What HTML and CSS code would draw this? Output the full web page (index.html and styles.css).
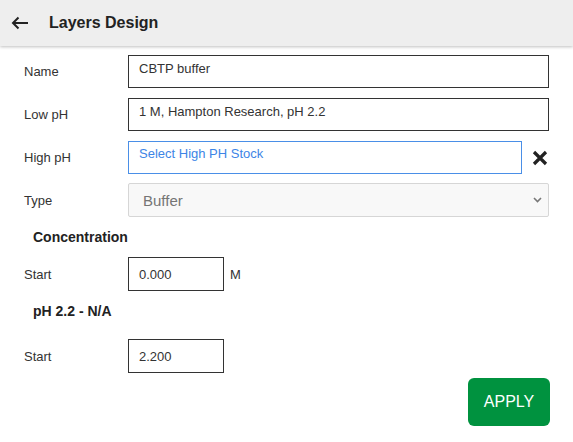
FILE: index.html
```html
<!DOCTYPE html>
<html>
<head>
<meta charset="utf-8">
<link rel="stylesheet" href="styles.css">
</head>
<body>
<header class="topbar">
  <svg class="back" width="18" height="14" viewBox="0 0 18 14"><path d="M17 7H2M7.5 1.5L2 7l5.5 5.5" fill="none" stroke="#222" stroke-width="2"/></svg>
  <span class="title">Layers Design</span>
</header>
<main class="form">
  <div class="row">
    <label class="lbl">Name</label>
    <div class="field">CBTP buffer</div>
  </div>
  <div class="row">
    <label class="lbl">Low pH</label>
    <div class="field">1 M, Hampton Research, pH 2.2</div>
  </div>
  <div class="row row-tight">
    <label class="lbl">High pH</label>
    <div class="field field-blue">Select High PH Stock</div>
    <svg class="clear" width="16" height="16" viewBox="0 0 16 16"><path d="M2 2L14 14M14 2L2 14" stroke="#222" stroke-width="3.2"/></svg>
  </div>
  <div class="row">
    <label class="lbl">Type</label>
    <div class="select">
      <span>Buffer</span>
      <svg width="9" height="6" viewBox="0 0 9 6"><path d="M1 1l3.5 3.5L8 1" fill="none" stroke="#777" stroke-width="1.6"/></svg>
    </div>
  </div>
  <h3 class="section">Concentration</h3>
  <div class="row">
    <label class="lbl">Start</label>
    <div class="num">0.000</div>
    <span class="unit">M</span>
  </div>
  <h3 class="section section2">pH 2.2 - N/A</h3>
  <div class="row">
    <label class="lbl">Start</label>
    <div class="num">2.200</div>
  </div>
  <div class="actions">
    <button class="apply">APPLY</button>
  </div>
</main>
</body>
</html>
```
FILE: styles.css
```css
html, body {
  margin: 0;
  padding: 0;
  background: #fff;
  font-family: "Liberation Sans", Arial, sans-serif;
  color: #333;
}
.topbar {
  height: 46px;
  background: #eeeeee;
  box-shadow: 0 1px 3px rgba(0,0,0,0.25);
  display: flex;
  align-items: center;
  padding-left: 11px;
  box-sizing: border-box;
}
.back {
  margin-right: 20px;
}
.title {
  font-weight: bold;
  font-size: 16px;
  color: #222;
}
.form {
  padding: 9px 24px 0 24px;
}
.row {
  display: flex;
  align-items: center;
  margin-bottom: 10px;
}
.row-tight {
  margin-bottom: 9px;
}
.lbl {
  width: 104px;
  flex: none;
  font-size: 13px;
  color: #333;
}
.field {
  box-sizing: border-box;
  width: 421px;
  height: 33px;
  border: 1.5px solid #333;
  padding: 5px 10px;
  font-size: 13px;
  color: #333;
}
.field-blue {
  width: 394px;
  border: 1.5px solid #4a8fe7;
  color: #3d85e6;
  padding-top: 4px;
}
.clear {
  margin-left: 10px;
}
.select {
  box-sizing: border-box;
  width: 421px;
  height: 34px;
  border: 1px solid #d6d6d6;
  border-radius: 2px;
  background: #f8f8f8;
  display: flex;
  align-items: center;
  justify-content: space-between;
  padding: 0 6px 0 14px;
  font-size: 15px;
  color: #757575;
}
.section {
  margin: 0 0 0 9px;
  font-size: 14px;
  font-weight: bold;
  color: #222;
  height: 30px;
  line-height: 20px;
}
.section2 {
  margin-top: 3px;
  height: 38px;
}
.num {
  box-sizing: border-box;
  width: 96px;
  height: 34px;
  border: 1.5px solid #333;
  padding: 0 10px;
  display: flex;
  align-items: center;
  font-size: 13px;
  color: #333;
}
.unit {
  margin-left: 6px;
  font-size: 13px;
  color: #333;
}
.actions {
  display: flex;
  justify-content: flex-end;
  margin-top: -5px;
}
.apply {
  width: 82px;
  height: 48px;
  border: none;
  border-radius: 6px;
  background: #00923f;
  color: #fff;
  font-family: "Liberation Sans", Arial, sans-serif;
  font-size: 16px;
  margin-right: -1px;
}
```
